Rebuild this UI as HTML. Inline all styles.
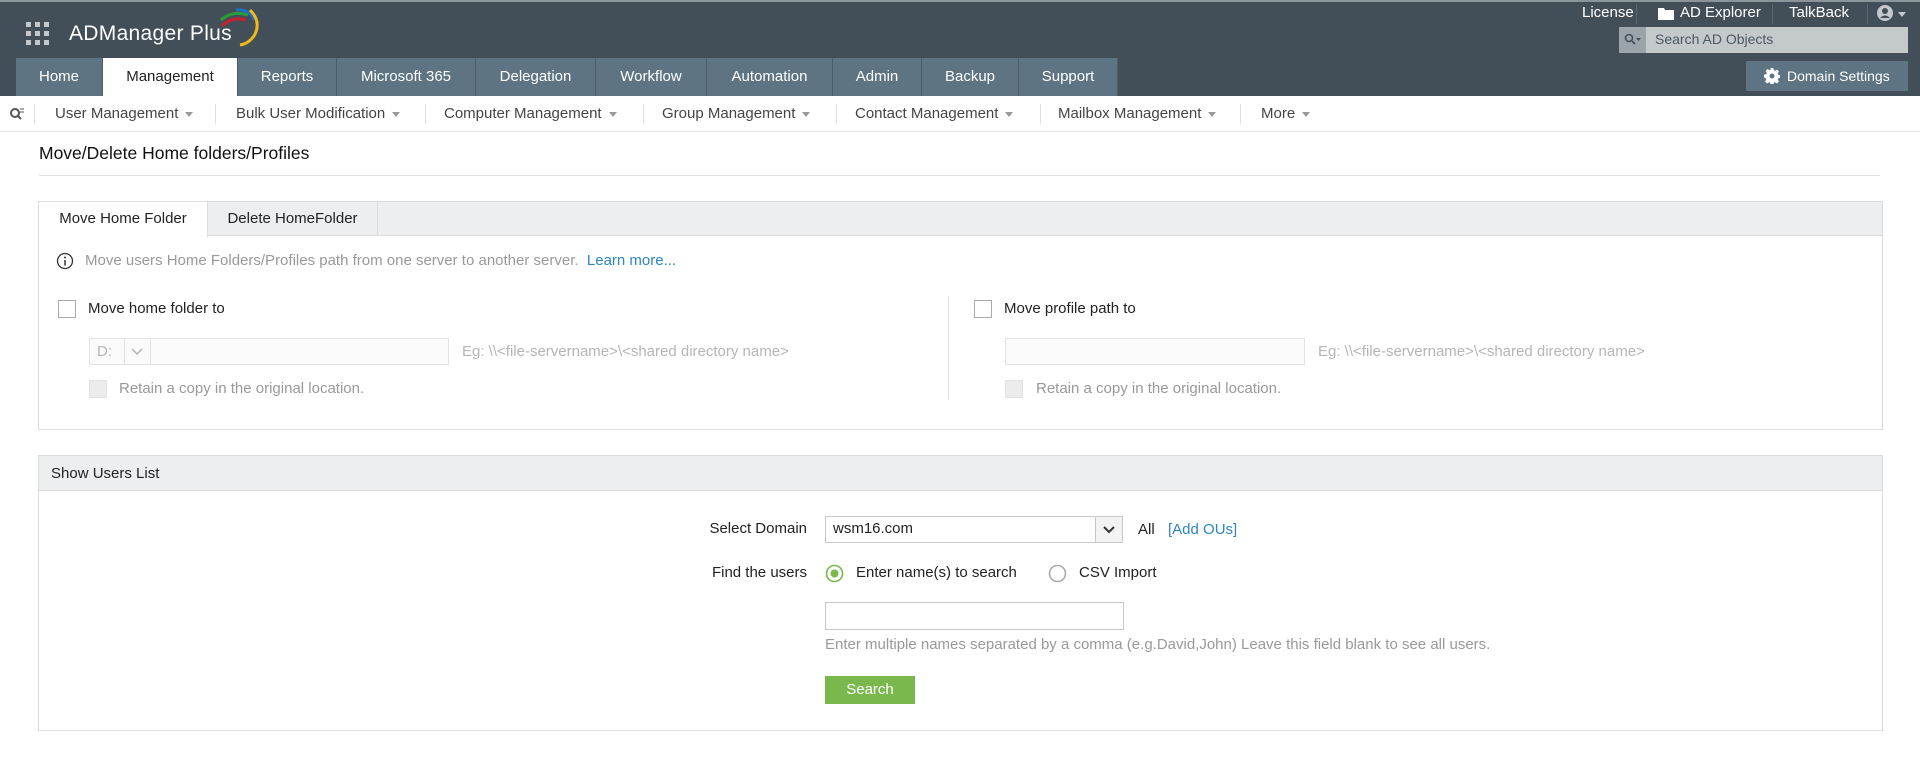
<!DOCTYPE html>
<html><head><meta charset="utf-8"><style>
*{box-sizing:border-box;margin:0;padding:0}
body{width:1920px;height:764px;background:#fff;font-family:"Liberation Sans",sans-serif;font-size:15px;color:#222;position:relative;overflow:hidden}
.a{position:absolute;white-space:nowrap}
#hdr{position:absolute;left:0;top:0;width:1920px;height:96px;background:#434f58;border-top:2px solid #8a949b}
.tab{position:absolute;top:58px;height:38px;background:#5e7482;color:#fff;text-align:center;line-height:38px;font-size:15px;border-right:1px solid #4c5d68}
.tab.on{background:#fff;color:#222}
.sub{position:absolute;top:96px;left:0;width:1920px;height:36px;border-bottom:1px solid #e3e6e8;background:#fff}
.sub span{position:absolute;top:9px;color:#444;font-size:15px}
.sub i{position:absolute;top:8px;width:1px;height:20px;background:#e0e0e0}
.car{display:inline-block;width:0;height:0;border-left:4px solid transparent;border-right:4px solid transparent;border-top:5px solid #999;margin-left:7px;vertical-align:middle}
.cb{position:absolute;width:18px;height:18px;border:1px solid #aaa;background:#fff}
.cbd{position:absolute;width:18px;height:18px;background:#ececec;border:1px solid #e2e2e2}
.gray{color:#b5b5b5}
</style></head><body>
<div id="hdr"></div>
<svg class="a" style="left:26px;top:22px" width="24" height="24"><g fill="#c3c8cc">
<rect x="0" y="0" width="5" height="5"/><rect x="9" y="0" width="5" height="5"/><rect x="18" y="0" width="5" height="5"/>
<rect x="0" y="9" width="5" height="5"/><rect x="9" y="9" width="5" height="5"/><rect x="18" y="9" width="5" height="5"/>
<rect x="0" y="18" width="5" height="5"/><rect x="9" y="18" width="5" height="5"/><rect x="18" y="18" width="5" height="5"/></g></svg>
<div class="a" style="left:69px;top:22px;font-size:21px;color:#fff;letter-spacing:0.3px">ADManager Plus</div>
<svg class="a" style="left:218px;top:6px" width="44" height="42"><path d="M4 20 Q14 10 28 14" stroke="#c8202f" stroke-width="3" fill="none"/><path d="M3 14 Q14 4 30 9" stroke="#2a9a3a" stroke-width="3" fill="none"/><path d="M18 4 Q32 3 36 14" stroke="#1d6fc2" stroke-width="3" fill="none"/><path d="M32 4 Q44 16 36 30 Q30 38 22 39" stroke="#f0b81a" stroke-width="3" fill="none"/></svg>
<div class="tab" style="left:16px;width:87px">Home</div>
<div class="tab on" style="left:103px;width:135px">Management</div>
<div class="tab" style="left:238px;width:99px">Reports</div>
<div class="tab" style="left:337px;width:139px">Microsoft 365</div>
<div class="tab" style="left:476px;width:120px">Delegation</div>
<div class="tab" style="left:596px;width:111px">Workflow</div>
<div class="tab" style="left:707px;width:126px">Automation</div>
<div class="tab" style="left:833px;width:89px">Admin</div>
<div class="tab" style="left:922px;width:97px">Backup</div>
<div class="tab" style="left:1019px;width:99px">Support</div>
<div class="a" style="left:1582px;top:4px;color:#fff;font-size:15px">License</div>
<div class="a" style="left:1636px;top:4px;width:1px;height:20px;background:#5a6770"></div>
<svg class="a" style="left:1658px;top:7px" width="16" height="13"><path d="M0 1h6l1 2h9v10H0z" fill="#fff"/></svg>
<div class="a" style="left:1680px;top:4px;color:#fff;font-size:15px">AD Explorer</div>
<div class="a" style="left:1772px;top:4px;width:1px;height:20px;background:#5a6770"></div>
<div class="a" style="left:1789px;top:4px;color:#fff;font-size:15px">TalkBack</div>
<div class="a" style="left:1867px;top:4px;width:1px;height:20px;background:#5a6770"></div>
<svg class="a" style="left:1877px;top:5px" width="36" height="18"><circle cx="8" cy="8" r="8" fill="#c3c8cc"/><circle cx="8" cy="6" r="3" fill="#434f58"/><path d="M3 13 Q8 8 13 13" fill="#434f58"/><path d="M21 7h8l-4 5z" fill="#c3c8cc"/></svg>
<div class="a" style="left:1619px;top:27px;width:289px;height:26px;background:#c4c9cc"></div>
<div class="a" style="left:1619px;top:27px;width:27px;height:26px;background:#9ba4aa"></div>
<svg class="a" style="left:1624px;top:33px" width="18" height="14"><circle cx="5" cy="5" r="3.5" stroke="#434f58" stroke-width="1.6" fill="none"/><path d="M8 8l3 3" stroke="#434f58" stroke-width="1.8"/><path d="M12 5h5l-2.5 3z" fill="#434f58"/></svg>
<div class="a" style="left:1655px;top:31px;color:#4c5860;font-size:14px">Search AD Objects</div>
<div class="a" style="left:1746px;top:61px;width:162px;height:30px;background:#5e7482"></div>
<svg class="a" style="left:1764px;top:68px" width="16" height="16" viewBox="0 0 16 16"><path fill="#fff" d="M6.6 0h2.8l.4 2.2 1.3.6 1.9-1.3 2 2-1.3 1.9.6 1.3 2.2.4v2.8l-2.2.4-.6 1.3 1.3 1.9-2 2-1.9-1.3-1.3.6-.4 2.2H6.6l-.4-2.2-1.3-.6-1.9 1.3-2-2 1.3-1.9-.6-1.3L0 9.4V6.6l2.2-.4.6-1.3-1.3-1.9 2-2 1.9 1.3 1.3-.6z"/><circle cx="8" cy="8" r="2.5" fill="#5e7482"/></svg>
<div class="a" style="left:1787px;top:68px;color:#fff;font-size:14px">Domain Settings</div>

<div class="sub">
<svg style="position:absolute;left:9px;top:11px" width="16" height="14"><circle cx="6" cy="6" r="4" stroke="#555" stroke-width="2" fill="none"/><path d="M9 9l3 3" stroke="#555" stroke-width="2"/><path d="M11 2h4M11 5h4" stroke="#555" stroke-width="1"/></svg>
<i style="left:34px"></i><span style="left:55px">User Management<b class="car"></b></span>
<i style="left:215px"></i><span style="left:236px">Bulk User Modification<b class="car"></b></span>
<i style="left:425px"></i><span style="left:444px">Computer Management<b class="car"></b></span>
<i style="left:643px"></i><span style="left:662px">Group Management<b class="car"></b></span>
<i style="left:836px"></i><span style="left:855px">Contact Management<b class="car"></b></span>
<i style="left:1040px"></i><span style="left:1058px">Mailbox Management<b class="car"></b></span>
<i style="left:1240px"></i><span style="left:1261px">More<b class="car"></b></span>
</div>

<div class="a" style="left:39px;top:143px;font-size:17.5px;color:#111">Move/Delete Home folders/Profiles</div>
<div class="a" style="left:39px;top:175px;width:1841px;height:1px;background:#e2e2e2"></div>

<div class="a" style="left:38px;top:201px;width:1845px;height:229px;border:1px solid #dcdcdc"></div>
<div class="a" style="left:39px;top:202px;width:1843px;height:34px;background:#eceeef;border-bottom:1px solid #dcdcdc"></div>
<div class="a" style="left:39px;top:202px;width:169px;height:35px;background:#fff;border-right:1px solid #dcdcdc;text-align:center;line-height:34px;font-size:15px">Move Home Folder</div>
<div class="a" style="left:208px;top:202px;width:170px;height:34px;border-right:1px solid #dcdcdc;text-align:center;line-height:34px;font-size:15px">Delete HomeFolder</div>
<svg class="a" style="left:56px;top:252px" width="18" height="18"><circle cx="9" cy="9" r="7.5" stroke="#333" stroke-width="1.3" fill="none"/><circle cx="9" cy="5.5" r="1" fill="#333"/><path d="M9 8v5.5" stroke="#333" stroke-width="1.5"/></svg>
<div class="a" style="left:85px;top:252px;font-size:15px;color:#999">Move users Home Folders/Profiles path from one server to another server. &nbsp;<span style="color:#2e86c1">Learn more...</span></div>

<div class="cb" style="left:58px;top:300px"></div>
<div class="a" style="left:88px;top:300px;font-size:15px">Move home folder to</div>
<div class="a" style="left:89px;top:338px;width:360px;height:27px;border:1px solid #e3e3e3;background:#fafafa"></div>
<div class="a" style="left:124px;top:339px;width:1px;height:25px;background:#e3e3e3"></div>
<div class="a" style="left:150px;top:339px;width:1px;height:25px;background:#e3e3e3"></div>
<div class="a gray" style="left:97px;top:343px;font-size:15px">D:</div>
<svg class="a" style="left:131px;top:348px" width="12" height="8"><path d="M1 1l5 5 5-5" stroke="#bbb" stroke-width="1.6" fill="none"/></svg>
<div class="a gray" style="left:462px;top:343px;font-size:15px">Eg: \\&lt;file-servername&gt;\&lt;shared directory name&gt;</div>
<div class="cbd" style="left:89px;top:380px"></div>
<div class="a" style="left:119px;top:380px;font-size:15px;color:#999">Retain a copy in the original location.</div>

<div class="a" style="left:948px;top:296px;width:1px;height:104px;background:#e3e3e3"></div>
<div class="cb" style="left:974px;top:300px"></div>
<div class="a" style="left:1004px;top:300px;font-size:15px">Move profile path to</div>
<div class="a" style="left:1005px;top:338px;width:300px;height:27px;border:1px solid #e3e3e3;background:#fafafa"></div>
<div class="a gray" style="left:1318px;top:343px;font-size:15px">Eg: \\&lt;file-servername&gt;\&lt;shared directory name&gt;</div>
<div class="cbd" style="left:1005px;top:380px"></div>
<div class="a" style="left:1036px;top:380px;font-size:15px;color:#999">Retain a copy in the original location.</div>

<div class="a" style="left:38px;top:455px;width:1845px;height:276px;border:1px solid #dcdcdc"></div>
<div class="a" style="left:39px;top:456px;width:1843px;height:35px;background:#eceeef;border-bottom:1px solid #dcdcdc"></div>
<div class="a" style="left:51px;top:465px;font-size:15px">Show Users List</div>

<div class="a" style="left:600px;top:520px;width:207px;text-align:right;font-size:15px">Select Domain</div>
<div class="a" style="left:825px;top:516px;width:298px;height:27px;border:1px solid #c8c8c8;background:#fff"></div>
<div class="a" style="left:1095px;top:517px;width:27px;height:25px;background:#f3f3f3;border-left:1px solid #c8c8c8"></div>
<svg class="a" style="left:1103px;top:526px" width="12" height="8"><path d="M1 1l5 5 5-5" stroke="#333" stroke-width="2" fill="none"/></svg>
<div class="a" style="left:833px;top:520px;font-size:15px">wsm16.com</div>
<div class="a" style="left:1138px;top:521px;font-size:15px">All</div>
<div class="a" style="left:1168px;top:521px;font-size:15px;color:#2e86c1">[Add OUs]</div>

<div class="a" style="left:600px;top:564px;width:207px;text-align:right;font-size:15px">Find the users</div>
<svg class="a" style="left:825px;top:564px" width="19" height="19"><circle cx="9.5" cy="9.5" r="8" stroke="#7ab84e" stroke-width="1.6" fill="#fff"/><circle cx="9.5" cy="9.5" r="4" fill="#7ab84e"/></svg>
<div class="a" style="left:856px;top:564px;font-size:15px">Enter name(s) to search</div>
<svg class="a" style="left:1048px;top:564px" width="19" height="19"><circle cx="9.5" cy="9.5" r="8" stroke="#aaa" stroke-width="1.6" fill="#fff"/></svg>
<div class="a" style="left:1079px;top:564px;font-size:15px">CSV Import</div>
<div class="a" style="left:825px;top:602px;width:299px;height:28px;border:1px solid #c8c8c8"></div>
<div class="a" style="left:825px;top:636px;font-size:15px;color:#999">Enter multiple names separated by a comma (e.g.David,John) Leave this field blank to see all users.</div>
<div class="a" style="left:825px;top:676px;width:90px;height:28px;background:#7ab84e;color:#fff;text-align:center;line-height:28px;font-size:15px">Search</div>
</body></html>
